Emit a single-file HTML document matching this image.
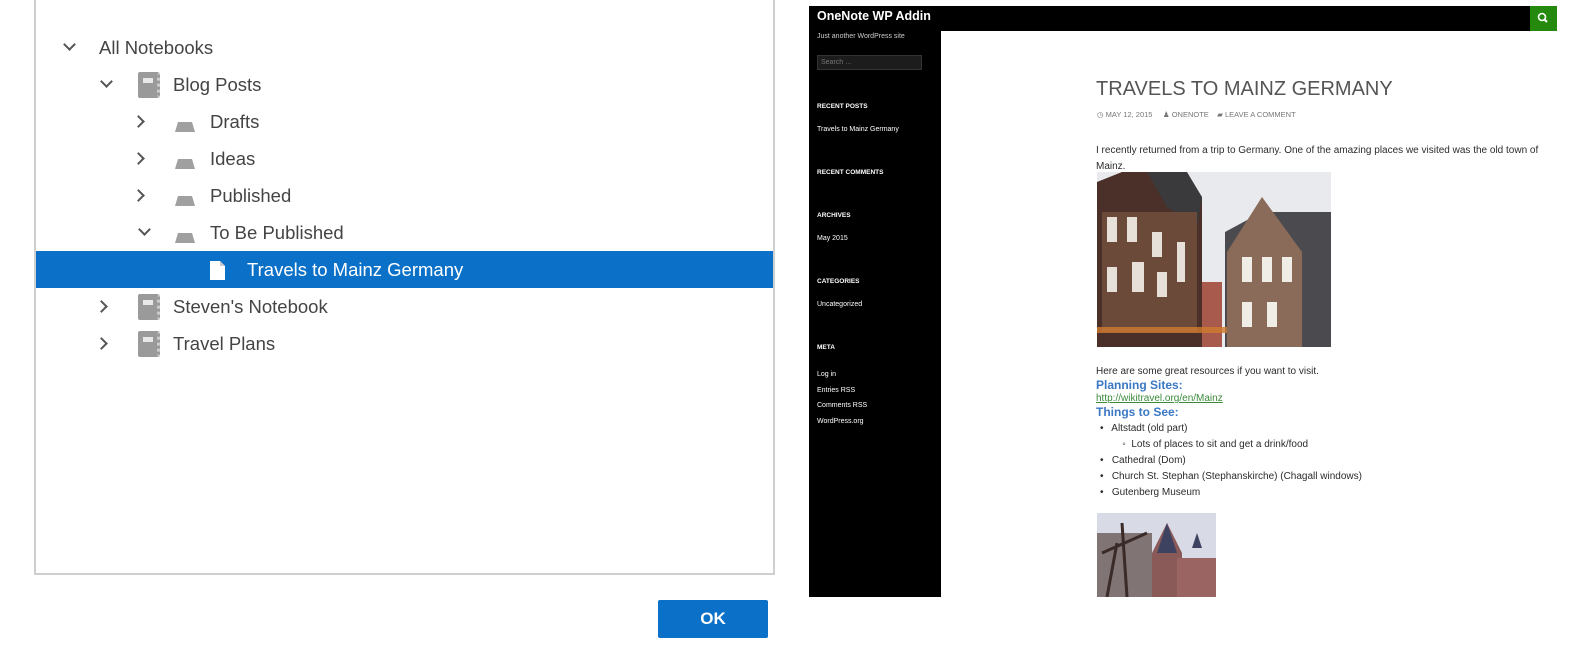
<!DOCTYPE html>
<html><head><meta charset="utf-8"><style>
*{margin:0;padding:0;box-sizing:border-box}
body{width:1572px;height:652px;background:#fff;position:relative;overflow:hidden;font-family:"Liberation Sans",sans-serif}
.box{position:absolute;left:34px;top:0;width:741px;height:575px;border:2px solid #cfcfcf;border-top:none}
.row{position:absolute;left:0;width:737px;height:37px;font-size:18.5px;color:#444;line-height:37px}
.row span{position:absolute;top:0}
.sel{background:#0a70c8;color:#fff}
.chev{position:absolute;width:9px;height:9px;border-right:2px solid #555;border-bottom:2px solid #555}
.down{transform:rotate(45deg)}
.right{transform:rotate(-45deg)}
.nb{position:absolute;width:22px;height:26px;background:#9a9a9a;border-radius:2px;border-right:3px dotted #ccc}
.nb:after{content:"";position:absolute;left:5px;top:6px;width:10px;height:5px;background:#e8e8e8}
.sec{position:absolute;width:20px;height:10px;background:#a0a0a0;clip-path:polygon(15% 0,85% 0,100% 100%,0 100%)}
.ok{position:absolute;left:658px;top:600px;width:110px;height:38px;background:#0a70c8;color:#fff;font-weight:bold;font-size:17px;text-align:center;line-height:38px;border-radius:2px}
.wp{position:absolute;left:809px;top:6px;width:748px;height:591px;background:#000}
.wp .w{position:absolute;color:#fff;font-family:"Liberation Sans",sans-serif}
.content{position:absolute;left:941px;top:31px;width:616px;height:566px;background:#fff}
.c{position:absolute;font-size:10px;color:#2b2b2b;white-space:nowrap}
</style></head><body>
<div class="box">
 <div class="row" style="top:29px"><i class="chev down" style="left:29px;top:11px"></i><span style="left:63px">All Notebooks</span></div>
 <div class="row" style="top:66px"><i class="chev down" style="left:66px;top:11px"></i><i class="nb" style="left:102px;top:6px"></i><span style="left:137px">Blog Posts</span></div>
 <div class="row" style="top:103px"><i class="chev right" style="left:98px;top:14px"></i><i class="sec" style="left:139px;top:19px"></i><span style="left:174px">Drafts</span></div>
 <div class="row" style="top:140px"><i class="chev right" style="left:98px;top:14px"></i><i class="sec" style="left:139px;top:19px"></i><span style="left:174px">Ideas</span></div>
 <div class="row" style="top:177px"><i class="chev right" style="left:98px;top:14px"></i><i class="sec" style="left:139px;top:19px"></i><span style="left:174px">Published</span></div>
 <div class="row" style="top:214px"><i class="chev down" style="left:104px;top:11px"></i><i class="sec" style="left:139px;top:19px"></i><span style="left:174px">To Be Published</span></div>
 <div class="row sel" style="top:251px"><svg style="position:absolute;left:174px;top:10px" width="15" height="19"><path d="M0 0H10L15 5V19H0Z" fill="#fff"/><path d="M10 0V5H15" fill="#ccc"/></svg><span style="left:211px">Travels to Mainz Germany</span></div>
 <div class="row" style="top:288px"><i class="chev right" style="left:61px;top:14px"></i><i class="nb" style="left:102px;top:6px"></i><span style="left:137px">Steven's Notebook</span></div>
 <div class="row" style="top:325px"><i class="chev right" style="left:61px;top:14px"></i><i class="nb" style="left:102px;top:6px"></i><span style="left:137px">Travel Plans</span></div>
</div>
<div class="ok">OK</div>

<div class="wp">
 <div class="w" style="left:8px;top:3px;font-size:12.5px;font-weight:bold">OneNote WP Addin</div>
 <div style="position:absolute;left:721px;top:0;width:27px;height:25px;background:#24890d"><svg width="27" height="25"><circle cx="12" cy="11" r="3.5" stroke="#fff" stroke-width="1.6" fill="none"/><path d="M14.5 13.5L17 16" stroke="#fff" stroke-width="2"/></svg></div>
 <div class="w" style="left:8px;top:27px;font-size:7px;color:#ccc">Just another WordPress site</div>
 <div style="position:absolute;left:8px;top:49px;width:105px;height:15px;background:#1c1c1c;border:1px solid #333;color:#777;font-size:7px;line-height:13px;padding-left:3px">Search …</div>
 <div class="w" style="left:8px;top:97px;font-size:6.5px;font-weight:bold">RECENT POSTS</div>
 <div class="w" style="left:8px;top:120px;font-size:7px">Travels to Mainz Germany</div>
 <div class="w" style="left:8px;top:163px;font-size:6.5px;font-weight:bold">RECENT COMMENTS</div>
 <div class="w" style="left:8px;top:206px;font-size:6.5px;font-weight:bold">ARCHIVES</div>
 <div class="w" style="left:8px;top:229px;font-size:7px">May 2015</div>
 <div class="w" style="left:8px;top:272px;font-size:6.5px;font-weight:bold">CATEGORIES</div>
 <div class="w" style="left:8px;top:295px;font-size:7px">Uncategorized</div>
 <div class="w" style="left:8px;top:338px;font-size:6.5px;font-weight:bold">META</div>
 <div class="w" style="left:8px;top:361px;font-size:7px;line-height:15.5px">Log in<br>Entries RSS<br>Comments RSS<br>WordPress.org</div>
</div>
<div class="content"></div>
<div class="c" style="left:1096px;top:78px;font-size:20px;color:#555">TRAVELS TO MAINZ GERMANY</div>
<div class="c" style="left:1097px;top:110px;font-size:7.5px;color:#777">◷ MAY 12, 2015 &nbsp;&nbsp;&nbsp; ♟ ONENOTE &nbsp;&nbsp; ▰ LEAVE A COMMENT</div>
<div class="c" style="left:1096px;top:143px;line-height:16px">I recently returned from a trip to Germany. One of the amazing places we visited was the old town of<br>Mainz.</div>
<svg style="position:absolute;left:1097px;top:172px" width="234" height="175">
<rect width="234" height="175" fill="#e9eaee"/>
<polygon points="0,10 25,0 60,0 105,25 105,175 0,175" fill="#4a3028"/>
<polygon points="50,0 90,0 105,25 100,55 70,35" fill="#3a3a3c"/>
<rect x="5" y="40" width="95" height="120" fill="#6b4a3a"/>
<g fill="#e6e0d8"><rect x="10" y="45" width="10" height="25"/><rect x="30" y="45" width="10" height="25"/><rect x="55" y="60" width="10" height="25"/><rect x="10" y="95" width="10" height="25"/><rect x="35" y="90" width="12" height="30"/><rect x="60" y="100" width="10" height="25"/><rect x="80" y="70" width="8" height="40"/></g>
<rect x="105" y="110" width="20" height="65" fill="#a85a4c"/>
<polygon points="128,60 165,40 234,40 234,175 128,175" fill="#4b4b4f"/>
<polygon points="130,80 165,25 205,80 205,175 130,175" fill="#8a6a58"/>
<g fill="#f0ece6"><rect x="145" y="85" width="10" height="25"/><rect x="165" y="85" width="10" height="25"/><rect x="185" y="85" width="10" height="25"/><rect x="145" y="130" width="10" height="25"/><rect x="170" y="130" width="10" height="25"/></g>
<rect x="0" y="155" width="130" height="6" fill="#d07a30" opacity=".8"/>
</svg>
<div class="c" style="left:1096px;top:366px">Here are some great resources if you want to visit.</div>
<div class="c" style="left:1096px;top:378px;font-size:12px;font-weight:bold;color:#3a78c4">Planning Sites:</div>
<div class="c" style="left:1096px;top:393px;color:#3a8a3a;text-decoration:underline">http://wikitravel.org/en/Mainz</div>
<div class="c" style="left:1096px;top:405px;font-size:12px;font-weight:bold;color:#3a78c4">Things to See:</div>
<div class="c" style="left:1100px;top:421px;line-height:16px">•&nbsp;&nbsp; Altstadt (old part)<br>&nbsp;&nbsp;&nbsp;&nbsp;&nbsp;&nbsp;&nbsp;&nbsp;◦&nbsp; Lots of places to sit and get a drink/food<br>•&nbsp;&nbsp; Cathedral (Dom)<br>•&nbsp;&nbsp; Church St. Stephan (Stephanskirche) (Chagall windows)<br>•&nbsp;&nbsp; Gutenberg Museum</div>
<svg style="position:absolute;left:1097px;top:513px" width="119" height="84">
<rect width="119" height="84" fill="#d8dbe6"/>
<polygon points="55,84 55,40 70,10 85,40 85,84" fill="#8a5a58"/>
<polygon points="60,40 70,10 80,40" fill="#3c4260"/>
<rect x="80" y="45" width="40" height="39" fill="#9a6462"/>
<polygon points="95,35 100,20 105,35" fill="#3c4260"/>
<rect x="0" y="20" width="55" height="64" fill="#6a5a58" opacity=".8"/>
<path d="M10 84L20 30M30 84L25 10M5 40L50 20" stroke="#3a2a28" stroke-width="3"/>
</svg>
</body></html>
